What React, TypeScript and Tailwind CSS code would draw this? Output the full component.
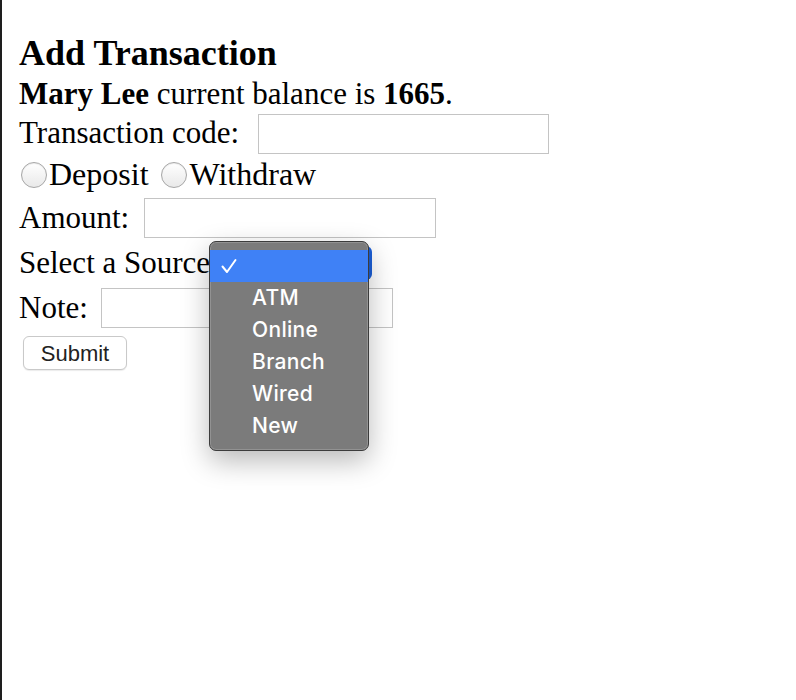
import React from 'react';

const sources = ['ATM', 'Online', 'Branch', 'Wired', 'New'];

const Radio: React.FC<{ className: string }> = ({ className }) => (
  <span className={`block w-[26px] h-[26px] shrink-0 rounded-full border border-[#a6a6a6] bg-gradient-to-b from-white to-[#e9e9e9] shadow-[inset_0_1px_1px_rgba(0,0,0,0.08)] ${className}`} />
);

const TextBox: React.FC<{ className: string }> = ({ className }) => (
  <span className={`block h-[40px] shrink-0 border border-[#c4c4c4] bg-white ${className}`} />
);

export default function App() {
  return (
    <div className="h-[700px] border-l-2 border-[#1e1e1e] bg-white pl-[17px] pt-[33px] text-black font-['Liberation_Serif','Times_New_Roman',serif]">
      <h3 className="text-[36px] leading-[41px] font-bold">Add Transaction</h3>
      <p className="text-[31px] leading-[39px]">
        <b>Mary Lee</b> current balance is <b>1665</b>.
      </p>

      <div className="flex items-center py-[1px] text-[31px]">
        <span className="pb-[3px] leading-[36px]">Transaction code:</span>
        <TextBox className="ml-[19px] w-[291px]" />
      </div>

      <div className="flex items-center h-[39px] text-[32px] leading-[39px]">
        <Radio className="ml-[2px] mr-[2px]" />
        <span>Deposit</span>
        <Radio className="ml-[12px] mr-[3px]" />
        <span>Withdraw</span>
      </div>

      <div className="flex items-center py-[4px] text-[31px]">
        <span className="leading-[36px]">Amount:</span>
        <TextBox className="ml-[15px] w-[292px]" />
      </div>

      <div className="flex items-center py-[4px] text-[31px]">
        <span className="leading-[34px]">Select a Source</span>
        <div className="relative ml-[3px] w-[159px] h-[34px] shrink-0 rounded-[6px] bg-[#1b5fd8]">
          <div className="absolute left-[-4px] top-[-5px] z-10 w-[160px] rounded-[7px] border border-[#3c3c3c] bg-[#7b7b7b] py-[8px] shadow-[0_10px_28px_rgba(0,0,0,0.28),inset_0_0_0_1px_rgba(255,255,255,0.18)] font-['Inter','Liberation_Sans',sans-serif] text-[21px] font-medium text-white">
            <div className="flex h-[32px] items-center bg-[#3f81f6] pl-[10px]">
              <svg width="18" height="18" viewBox="0 0 18 18" fill="none">
                <path d="M2.5 9.5 L7 15 L15.5 3" stroke="white" strokeWidth="2" strokeLinecap="round" strokeLinejoin="round" />
              </svg>
            </div>
            {sources.map((s) => (
              <div key={s} className="flex h-[32px] items-center pl-[42px] tracking-[0.3px]">
                {s}
              </div>
            ))}
          </div>
        </div>
      </div>

      <div className="flex items-center py-[4px] text-[31px]">
        <span className="leading-[36px]">Note:</span>
        <TextBox className="ml-[13px] w-[292px]" />
      </div>

      <button className="block mt-[4px] ml-[4px] h-[34px] w-[104px] rounded-[6px] border border-[#c9c9c9] bg-white text-[22px] text-[#222] shadow-[0_1px_1px_rgba(0,0,0,0.08)] font-['Liberation_Sans','Helvetica',sans-serif]">
        Submit
      </button>
    </div>
  );
}
